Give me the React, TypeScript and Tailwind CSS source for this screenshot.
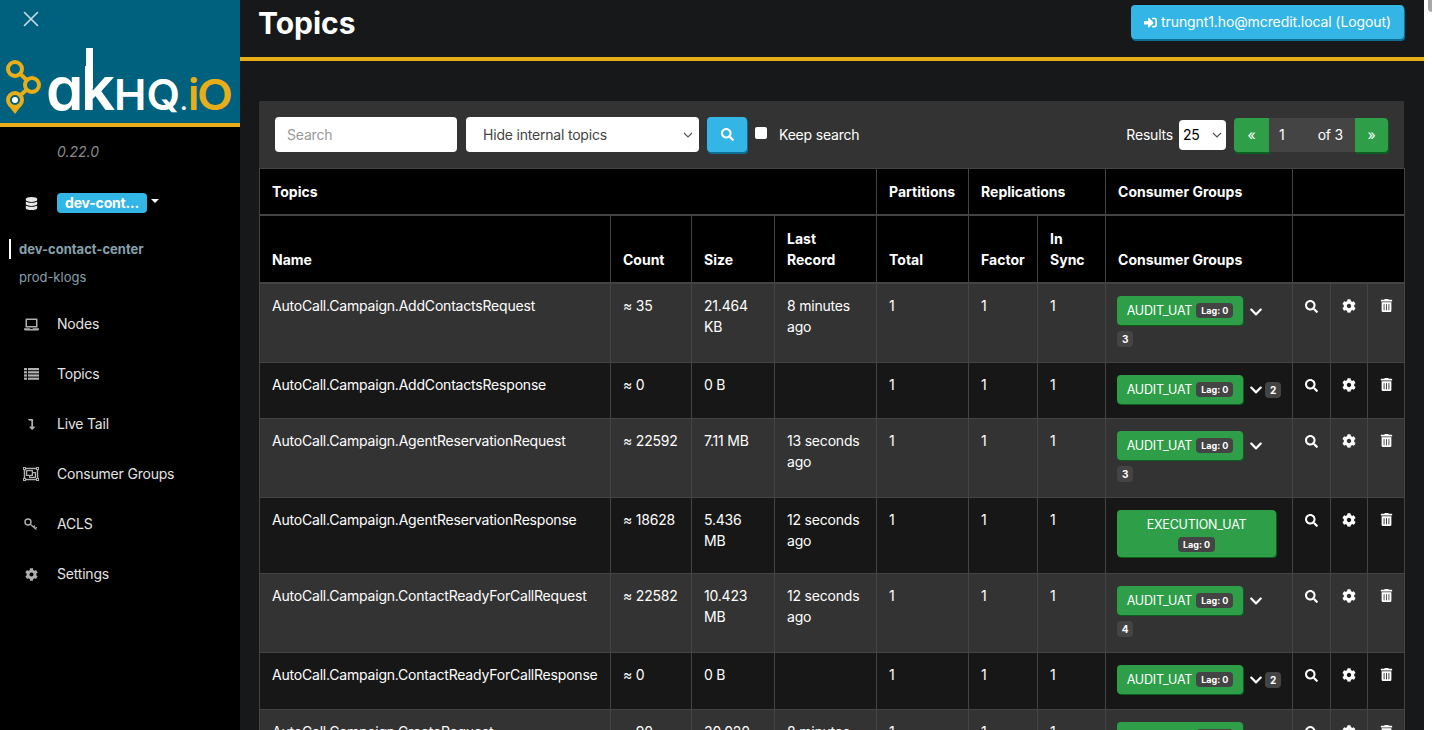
import React from 'react';
import { X } from 'lucide-react';
import {
  FaChevronDown,
  FaCog,
  FaDatabase,
  FaLaptop,
  FaLevelDownAlt,
  FaRegObjectGroup,
  FaSearch,
  FaSignInAlt,
  FaTrashAlt,
} from 'react-icons/fa';

interface TopicRow {
  name: string;
  count: string;
  size: string;
  last: string;
  group: string;
  more?: string;
  wrapMore?: boolean;
  height: string;
  dark: boolean;
}

const rows: TopicRow[] = [
  { name: 'AutoCall.Campaign.AddContactsRequest', count: '≈ 35', size: '21.464 KB', last: '8 minutes ago', group: 'AUDIT_UAT', more: '3', wrapMore: true, height: 'h-[79px]', dark: false },
  { name: 'AutoCall.Campaign.AddContactsResponse', count: '≈ 0', size: '0 B', last: '', group: 'AUDIT_UAT', more: '2', height: 'h-[56px]', dark: true },
  { name: 'AutoCall.Campaign.AgentReservationRequest', count: '≈ 22592', size: '7.11 MB', last: '13 seconds ago', group: 'AUDIT_UAT', more: '3', wrapMore: true, height: 'h-[79px]', dark: false },
  { name: 'AutoCall.Campaign.AgentReservationResponse', count: '≈ 18628', size: '5.436 MB', last: '12 seconds ago', group: 'EXECUTION_UAT', height: 'h-[76px]', dark: true },
  { name: 'AutoCall.Campaign.ContactReadyForCallRequest', count: '≈ 22582', size: '10.423 MB', last: '12 seconds ago', group: 'AUDIT_UAT', more: '4', wrapMore: true, height: 'h-[79px]', dark: false },
  { name: 'AutoCall.Campaign.ContactReadyForCallResponse', count: '≈ 0', size: '0 B', last: '', group: 'AUDIT_UAT', more: '2', height: 'h-[57px]', dark: true },
  { name: 'AutoCall.Campaign.CreateRequest', count: '≈ 90', size: '30.020 KB', last: '8 minutes ago', group: 'AUDIT_UAT', more: '3', wrapMore: true, height: 'h-[80px]', dark: false },
];

const ListIcon = () => (
  <svg width="15" height="12" viewBox="0 0 15 12" fill="currentColor">
    <rect x="0" y="0" width="3" height="2.2" />
    <rect x="4" y="0" width="11" height="2.2" />
    <rect x="0" y="3.2" width="3" height="2.2" />
    <rect x="4" y="3.2" width="11" height="2.2" />
    <rect x="0" y="6.4" width="3" height="2.2" />
    <rect x="4" y="6.4" width="11" height="2.2" />
    <rect x="0" y="9.6" width="3" height="2.2" />
    <rect x="4" y="9.6" width="11" height="2.2" />
  </svg>
);

const KeyIcon = () => (
  <svg width="14" height="13" viewBox="0 0 14 13" fill="none" stroke="currentColor">
    <circle cx="4" cy="4" r="3" strokeWidth="1.4" />
    <path d="M6.2 6.2 L12.5 11.5 M9.5 9 L11 7.6 M11.3 10.5 L12.8 9.2" strokeWidth="1.3" />
  </svg>
);

const navItems = [
  { label: 'Nodes', icon: <FaLaptop size={15} /> },
  { label: 'Topics', icon: <ListIcon /> },
  { label: 'Live Tail', icon: <FaLevelDownAlt size={11} /> },
  { label: 'Consumer Groups', icon: <FaRegObjectGroup size={16} /> },
  { label: 'ACLS', icon: <KeyIcon /> },
  { label: 'Settings', icon: <FaCog size={13} /> },
];

const Logo = () => (
  <svg width="240" height="80" viewBox="0 0 240 80" className="block">
    {/* network mark */}
    <path d="M15 21 L32 37 L15 52" fill="none" stroke="#e8ae17" strokeWidth="4" />
    <circle cx="15" cy="21" r="7" fill="#00617f" stroke="#e8ae17" strokeWidth="4" />
    <circle cx="32" cy="37" r="7" fill="#00617f" stroke="#e8ae17" strokeWidth="4" />
    <path d="M8 57 L15 66 L22 57 Z" fill="#e8ae17" />
    <circle cx="15" cy="52" r="7" fill="#00617f" stroke="#e8ae17" strokeWidth="4" />
    <circle cx="15" cy="52" r="3" fill="#fff" />
    {/* wordmark */}
    <rect x="86" y="0" width="7" height="40" fill="#fff" />
    <text x="46" y="62" fontFamily="Inter, sans-serif" fontSize="60" fontWeight="600" fill="#fff" className="[font-feature-settings:'cv11']">a</text>
    <text x="81" y="62" fontFamily="Inter, sans-serif" fontSize="60" fontWeight="600" fill="#fff">k</text>
    <text x="114" y="62" fontFamily="Inter, sans-serif" fontSize="43" fontWeight="600" fill="#fff" textLength="66" lengthAdjust="spacingAndGlyphs">HQ</text>
    <text x="180" y="62" fontFamily="Inter, sans-serif" fontSize="24" fontWeight="600" fill="#fff">.</text>
    <text x="188" y="62" fontFamily="Inter, sans-serif" fontSize="43" fontWeight="600" fill="#e8ae17">i</text>
    <text x="197" y="62" fontFamily="Inter, sans-serif" fontSize="43" fontWeight="600" fill="#e8ae17" textLength="36" lengthAdjust="spacingAndGlyphs">O</text>
  </svg>
);

const Sidebar = () => (
  <aside className="w-[240px] shrink-0 bg-black h-full">
    <div className="h-[127px] bg-[#00617f] border-b-4 border-[#e8ae17] relative pt-[48px]">
      <X className="absolute left-[18px] top-[6px] text-[#c4dde6]" size={26} strokeWidth={1.5} />
      <Logo />
    </div>
    <div className="pl-[57px] mt-[15px] text-sm italic text-[#8a8a8a] leading-5">0.22.0</div>
    <div className="flex items-center mt-[31px] h-5">
      <div className="w-[57px] flex justify-center pl-[5px] text-[#e8e8e8]">
        <FaDatabase size={13} />
      </div>
      <div className="w-[90px] h-5 rounded bg-[#33b5e5] text-white text-sm font-bold leading-5 text-center tracking-[-0.2px]">dev-cont...</div>
      <div className="ml-1 mb-1 border-x-[4px] border-t-[4px] border-x-transparent border-t-white" />
    </div>
    <div className="mt-[26px] flex items-center h-5 pl-[9px]">
      <div className="w-[2px] h-5 bg-white" />
      <span className="ml-2 text-[13px] font-bold text-[#86a0ad] relative top-px">dev-contact-center</span>
    </div>
    <div className="mt-2 pl-[19px] h-5 leading-5 text-[13px] text-[#86a0ad]">prod-klogs</div>
    <nav className="mt-[12px]">
      {navItems.map(item => (
        <div key={item.label} className="h-[50px] flex items-center text-sm text-[#e4e4e4] tracking-[-0.2px]">
          <div className="w-[57px] flex justify-center pl-[5px] text-[#b0b0b0]">{item.icon}</div>
          <span>{item.label}</span>
        </div>
      ))}
    </nav>
  </aside>
);

const Toolbar = () => (
  <div className="h-[67px] flex items-center px-4 bg-[#333333] text-sm text-white tracking-[-0.2px]">
    <input
      placeholder="Search"
      className="w-[182px] h-[35px] rounded bg-white px-3 text-sm text-[#333] placeholder:text-[#999] outline-none"
    />
    <div className="relative ml-[9px]">
      <select defaultValue="hide" className="w-[233px] h-[35px] rounded bg-white pl-[17px] text-sm text-[#444] appearance-none outline-none">
        <option value="hide">Hide internal topics</option>
      </select>
      <svg width="10" height="6" viewBox="0 0 10 6" className="absolute right-[6px] top-[15px]">
        <path d="M1 1 L5 5 L9 1" fill="none" stroke="#555" strokeWidth="1.2" />
      </svg>
    </div>
    <button className="ml-2 w-10 h-[35px] rounded bg-[#33b5e5] flex items-center justify-center shadow-[1px_2px_0_#0e6f94]">
      <FaSearch size={13} className="text-white" />
    </button>
    <input type="checkbox" className="ml-2 w-3 h-3 mb-[3px] appearance-none bg-white rounded-[2px]" />
    <span className="ml-3">Keep search</span>
    <div className="ml-auto flex items-center">
      <span>Results</span>
      <div className="relative ml-[6px]">
        <select defaultValue="25" className="w-[47px] h-[30px] rounded bg-white pl-1 text-sm text-black appearance-none outline-none">
          <option value="25">25</option>
        </select>
        <svg width="10" height="6" viewBox="0 0 10 6" className="absolute right-[4px] top-[12px]">
          <path d="M1 1 L5 5 L9 1" fill="none" stroke="#555" strokeWidth="1.2" />
        </svg>
      </div>
      <div className="ml-2 flex items-center h-[34px]">
        <div className="w-[35px] h-full rounded-l bg-[#2e9e48] flex items-center justify-center shadow-[1px_2px_0_#0b5f20]">«</div>
        <div className="w-[86px] h-full bg-[#444444] flex items-center justify-between pl-[10px] pr-3">
          <span>1</span>
          <span>of 3</span>
        </div>
        <div className="w-[33px] h-full rounded-r bg-[#2e9e48] flex items-center justify-center shadow-[1px_2px_0_#0b5f20]">»</div>
      </div>
    </div>
  </div>
);

const GroupCell = ({ row }: { row: TopicRow }) => {
  const lag = (
    <span className="inline-block h-[15px] px-[5px] rounded-[4px] bg-[#444444] text-[9px] font-bold leading-[15px] text-white tracking-normal">Lag: 0</span>
  );

  if (!row.more) {
    return (
      <div className="-ml-px mt-px w-[159px] h-[47px] rounded bg-[#2e9e48] shadow-[1px_1px_0_#0b5f20] flex flex-col items-center justify-center gap-[2px] text-[12.5px] text-white">
        <span>{row.group}</span>
        {lag}
      </div>
    );
  }

  return (
    <div className={`-ml-px mt-px flex items-center ${row.wrapMore ? 'flex-wrap' : 'flex-nowrap'}`}>
      <div className="w-[126px] h-[29px] shrink-0 rounded bg-[#2e9e48] shadow-[1px_1px_0_#0b5f20] flex items-center justify-center gap-[4px] text-[12.5px] text-white">
        <span>{row.group}</span>
        {lag}
      </div>
      <FaChevronDown size={14} className="ml-[6px] mt-[2px] shrink-0 text-white" />
      {row.wrapMore ? <div className="basis-full h-[6px]" /> : null}
      <span className={`${row.wrapMore ? '' : 'ml-[2px] mt-[2px]'} h-4 w-4 shrink-0 rounded-[4px] bg-[#444444] text-[10px] font-bold leading-4 text-center text-white`}>{row.more}</span>
    </div>
  );
};

const TopicsTable = () => {
  const th = 'border border-[#444444] px-3 py-3 text-left align-bottom font-bold leading-[21px]';
  const td = 'border border-[#444444] px-3 pt-[11px] align-top leading-[21px] tracking-[-0.2px]';

  return (
    <table className="w-full table-fixed border-collapse text-sm text-white">
      <colgroup>
        <col className="w-[351px]" />
        <col className="w-[81px]" />
        <col className="w-[83px]" />
        <col className="w-[102px]" />
        <col className="w-[92px]" />
        <col className="w-[69px]" />
        <col className="w-[68px]" />
        <col className="w-[187px]" />
        <col className="w-[38px]" />
        <col className="w-[37px]" />
        <col className="w-[37px]" />
      </colgroup>
      <thead className="bg-black">
        <tr className="h-[46px] border-b-2 border-[#444444]">
          <th colSpan={4} className={th}>Topics</th>
          <th className={th}>Partitions</th>
          <th colSpan={2} className={th}>Replications</th>
          <th className={th}>Consumer Groups</th>
          <th colSpan={3} className={th}></th>
        </tr>
        <tr className="h-[68px] border-b-2 border-[#444444]">
          <th className={th}>Name</th>
          <th className={th}>Count</th>
          <th className={th}>Size</th>
          <th className={th}>Last Record</th>
          <th className={th}>Total</th>
          <th className={th}>Factor</th>
          <th className={th}>In Sync</th>
          <th className={th}>Consumer Groups</th>
          <th colSpan={3} className={th}></th>
        </tr>
      </thead>
      <tbody>
        {rows.map(row => (
          <tr key={row.name} className={`${row.height} ${row.dark ? 'bg-[#171717]' : 'bg-[#333333]'}`}>
            <td className={td}>{row.name}</td>
            <td className={td}>{row.count}</td>
            <td className={td}>{row.size}</td>
            <td className={td}>{row.last}</td>
            <td className={td}>1</td>
            <td className={td}>1</td>
            <td className={td}>1</td>
            <td className={td}><GroupCell row={row} /></td>
            <td className={td}><FaSearch size={13} className="mt-[5px]" /></td>
            <td className={td}><FaCog size={14} className="mt-[4px] -ml-px" /></td>
            <td className={td}><FaTrashAlt size={13} className="mt-[4px]" /></td>
          </tr>
        ))}
      </tbody>
    </table>
  );
};

export default function App() {
  return (
    <div className="flex h-screen overflow-hidden font-['Inter',sans-serif]">
      <Sidebar />
      <main className="flex-1 min-w-0 bg-[#171819] h-full overflow-hidden">
        <header className="h-[61px] border-b-4 border-[#e8ae17] flex items-start justify-between pl-[18px] pr-5">
          <h1 className="text-3xl font-bold text-white leading-[47px]">Topics</h1>
          <button className="mt-[5px] w-[273px] h-[34px] rounded bg-[#33b5e5] shadow-[1px_2px_0_#0e6f94] flex items-center justify-center gap-1 text-sm text-white tracking-[-0.1px]">
            <FaSignInAlt size={13} />
            <span>trungnt1.ho@mcredit.local (Logout)</span>
          </button>
        </header>
        <section className="mt-10 mr-5 ml-[19px]">
          <Toolbar />
          <TopicsTable />
        </section>
      </main>
      <div className="w-2 shrink-0 bg-white h-full flex justify-end items-start">
        <div className="w-1 h-3 bg-[#a8a8a8] rounded-bl" />
      </div>
    </div>
  );
}
